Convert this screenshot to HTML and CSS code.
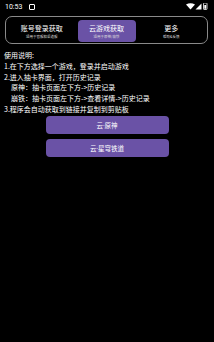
FILE: index.html
```html
<!DOCTYPE html>
<html lang="zh">

<head>
    <meta charset="UTF-8">
    <meta name="viewport" content="width=device-width, initial-scale=1.0">
    <title>抽卡记录获取</title>
    <link rel="stylesheet" href="styles.css">
</head>

<body>
    <div class="status-bar">
        <span class="time">10:53</span>
        <span class="notify"></span>
        <span class="status-icons">
            <svg width="22" height="7" viewBox="0 0 22 7">
                <path d="M0 1.5 Q4.5 -1 9 1.5 L4.5 6.5 Z" fill="#fff" />
                <path d="M15.5 0.5 L15.5 6.5 L9.5 6.5 Z" fill="#fff" />
                <rect x="17.5" y="0" width="3.5" height="6.5" rx="0.6" fill="none" stroke="#fff" stroke-width="0.8" />
                <rect x="18.3" y="2" width="1.9" height="3.8" fill="#fff" />
            </svg>
        </span>
    </div>

    <div class="tabs">
        <div class="tab">
            <div class="tab-title">账号登录获取</div>
            <div class="tab-sub">适用于官服和渠道服</div>
        </div>
        <div class="tab active">
            <div class="tab-title">云游戏获取</div>
            <div class="tab-sub">适用于原神/崩铁</div>
        </div>
        <div class="tab">
            <div class="tab-title">更多</div>
            <div class="tab-sub">帮助&amp;反馈</div>
        </div>
    </div>

    <div class="guide">
        <p>使用说明:</p>
        <p>1.在下方选择一个游戏，登录并启动游戏</p>
        <p>2.进入抽卡界面，打开历史记录</p>
        <p class="indent">原神：抽卡页面左下方-&gt;历史记录</p>
        <p class="indent">崩铁：抽卡页面左下方-&gt;查看详情-&gt;历史记录</p>
        <p>3.程序会自动获取到链接并复制到剪贴板</p>
    </div>

    <div class="actions">
        <button class="game-button">云·原神</button>
        <button class="game-button">云·星穹铁道</button>
    </div>
</body>

</html>
```

FILE: styles.css
```css
body {
    margin: 0;
    width: 214px;
    height: 342px;
    background-color: #000;
    color: #fff;
    font-family: "Noto Sans CJK SC", "Noto Sans", sans-serif;
    overflow: hidden;
}

.status-bar {
    display: flex;
    align-items: center;
    height: 13px;
    padding: 0 6px 0 5px;
    font-family: Roboto, sans-serif;
    font-size: 7px;
}

.notify {
    width: 4px;
    height: 4px;
    margin-left: 7px;
    border: 1px solid #fff;
    border-radius: 1px;
}

.status-icons {
    margin-left: auto;
    display: flex;
}

.tabs {
    display: flex;
    align-items: center;
    margin: 3px 6px 0 5px;
    height: 28px;
    padding: 0 4px;
    border: 1px solid #8a8a8a;
    border-radius: 7px;
    box-sizing: border-box;
}

.tab {
    flex: 1;
    text-align: center;
    height: 22px;
    margin-top: 2px;
    display: flex;
    flex-direction: column;
    justify-content: center;
    border-radius: 4px;
}

.tab.active {
    flex: 0 0 58px;
    background-color: #6a52a6;
    margin: 2px 4px 0;
}

.tab-title {
    font-size: 7px;
    line-height: 9px;
}

.tab-sub {
    font-size: 3.5px;
    line-height: 5px;
    color: #ddd;
    margin-top: 1px;
}

.guide {
    margin: 6px 0 0 4px;
    font-size: 7px;
    line-height: 10.8px;
}

.guide p {
    margin: 0;
}

.guide .indent {
    padding-left: 7px;
}

.actions {
    display: flex;
    flex-direction: column;
    align-items: center;
    gap: 5px;
    margin-top: 1px;
}

.game-button {
    width: 123px;
    height: 18px;
    border: none;
    border-radius: 4px;
    background-color: #6a52a6;
    color: #fff;
    font-family: Roboto, "Noto Sans CJK SC", sans-serif;
    font-size: 6.5px;
    padding: 0;
}
```
